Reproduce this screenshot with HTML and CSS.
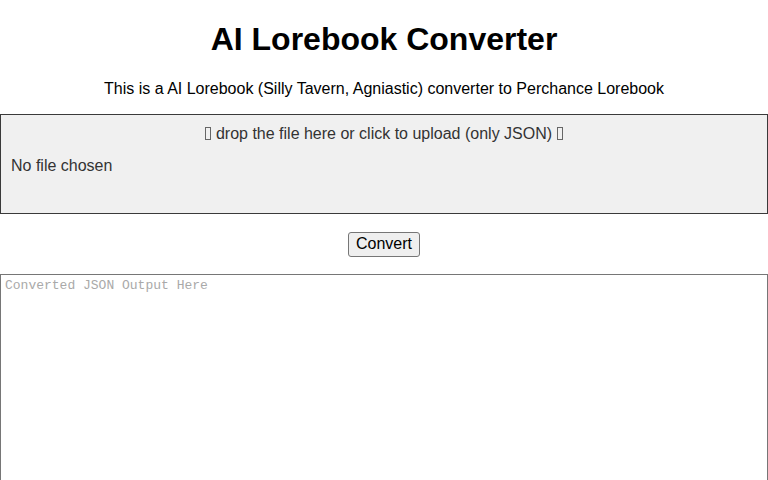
FILE: index.html
```html
<!DOCTYPE html>
<html lang="en">
<head>
<meta charset="utf-8">
<title>AI Lorebook Converter</title>
<link rel="stylesheet" href="styles.css">
</head>
<body>
  <h1 class="title">AI Lorebook Converter</h1>
  <p class="intro">This is a AI Lorebook (Silly Tavern, Agniastic) converter to Perchance Lorebook</p>

  <label class="dropzone">
    <span class="drop-hint"><span class="glyph"></span> drop the file here or click to upload (only JSON) <span class="glyph"></span></span>
    <span class="file-status">No file chosen</span>
  </label>

  <div class="actions">
    <button class="convert-btn" type="button">Convert</button>
  </div>

  <textarea class="output" placeholder="Converted JSON Output Here"></textarea>
</body>
</html>
```
FILE: styles.css
```css
html, body {
  margin: 0;
  padding: 0;
  background: #fff;
}

body {
  font-family: "Liberation Sans", Arial, sans-serif;
  font-size: 16px;
  color: #000;
  overflow: hidden;
}

.title {
  font-size: 32px;
  font-weight: bold;
  text-align: center;
  margin: 21px 0 22px;
  line-height: 37px;
}

.intro {
  text-align: center;
  margin: 0 0 16px;
  line-height: 18px;
}

.dropzone {
  display: flex;
  flex-direction: column;
  box-sizing: border-box;
  height: 100px;
  border: 1px solid #3a3a3a;
  background: #f0f0f0;
  color: #333;
  padding: 10px 10px 0;
  line-height: 18px;
  cursor: pointer;
}

.drop-hint {
  text-align: center;
}

.glyph {
  display: inline-block;
  width: 4px;
  height: 11px;
  border: 1px solid #666;
  vertical-align: -1px;
}

.file-status {
  margin-top: 14px;
}

.actions {
  display: flex;
  justify-content: center;
  margin-top: 18px;
}

.convert-btn {
  font-family: "Liberation Sans", Arial, sans-serif;
  font-size: 16px;
  line-height: 18px;
  padding: 2px 7px 3px;
  color: #000;
  background: #efefef;
  border: 1px solid #767676;
  border-radius: 3px;
}

.output {
  display: block;
  box-sizing: border-box;
  width: 100%;
  height: 260px;
  margin: 17px 0 0;
  padding: 3px 4px;
  border: 1px solid #767676;
  font-family: "Liberation Mono", "Courier New", monospace;
  font-size: 13px;
  line-height: 15px;
  resize: vertical;
}

.output::placeholder {
  color: #a9a9a9;
}
```
